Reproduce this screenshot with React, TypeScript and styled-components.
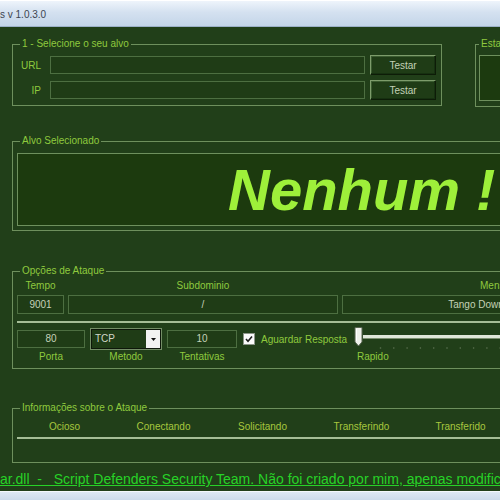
import React from 'react'
import styled, { createGlobalStyle } from 'styled-components'

const GlobalStyle = createGlobalStyle`
  html, body {
    margin: 0;
    padding: 0;
  }
  body {
    width: 500px;
    height: 500px;
    overflow: hidden;
    background: #213f19;
    font-family: 'Liberation Sans', Arial, sans-serif;
  }
`

const Screen = styled.div`
  width: 500px;
  height: 500px;
  overflow: hidden;
  display: flex;
  flex-direction: column;
  background: #213f19;
`

const TitleBar = styled.div`
  flex: 0 0 27px;
  box-sizing: border-box;
  display: flex;
  align-items: center;
  padding-top: 2px;
  background: linear-gradient(#eef4fb, #d4e1f0 45%, #c4d5e9);
  border-top: 1px solid #ffffff;
  border-bottom: 1px solid #9cb1c8;
  color: #3b4450;
  font-size: 10px;
  white-space: nowrap;
`

const Client = styled.div`
  flex: 0 0 auto;
  width: 680px;
  padding-left: 12px;
  display: flex;
  flex-direction: column;
`

const TopRow = styled.div`
  display: flex;
  align-items: flex-start;
  margin-top: 12px;
`

const Group = styled.fieldset<{ $top?: number; $left?: number; $width: number }>`
  margin: ${(p) => p.$top ?? 0}px 0 0 ${(p) => p.$left ?? 0}px;
  padding: 0;
  width: ${(p) => p.$width}px;
  box-sizing: border-box;
  min-width: 0;
  border: 1px solid #6e905d;
`

const Legend = styled.legend<{ $indent?: number }>`
  margin-left: ${(p) => p.$indent ?? 7}px;
  padding: 0 2px;
  font-size: 10px;
  line-height: 10px;
  color: #8fca3e;
  white-space: nowrap;
`

const TargetGrid = styled.div`
  display: grid;
  grid-template-columns: 32px 315px 66px;
  grid-auto-rows: 20px;
  column-gap: 5px;
  row-gap: 5px;
  align-items: center;
  padding: 6px 5px 5px 0;
`

const FieldLabel = styled.div`
  padding-right: 4px;
  text-align: right;
  font-size: 10px;
  color: #8fca3e;
`

const TextBox = styled.div<{ $align?: 'left' | 'center' }>`
  height: 18px;
  box-sizing: border-box;
  padding: 0 3px;
  border: 1px solid #4d6f41;
  background: #1f3c16;
  color: #c4d2b8;
  font-size: 10px;
  line-height: 16px;
  text-align: ${(p) => p.$align ?? 'left'};
  white-space: nowrap;
  overflow: hidden;
`

const TestButton = styled.button`
  height: 20px;
  padding: 0;
  border: 1px solid;
  border-color: #7d9c6b #0d1c07 #0d1c07 #7d9c6b;
  box-shadow: inset -1px -1px 0 #163010, inset 1px 1px 0 #3b5c30;
  background: #1f3c16;
  color: #c3d2b6;
  font-family: 'Liberation Sans', Arial, sans-serif;
  font-size: 10px;
`

const StatusBody = styled.div`
  padding: 6px 4px 5px 3px;
`

const StatusBox = styled.div`
  height: 46px;
  box-sizing: border-box;
  border: 1px solid #6e905d;
  background: #1c3a0f;
`

const DisplayBody = styled.div`
  padding: 7px 4px 4px;
`

const TargetDisplay = styled.div`
  height: 73px;
  box-sizing: border-box;
  padding-left: 210px;
  border: 1px solid #6e905d;
  background: #1c3a0e;
  color: #9ef03a;
  font-size: 58px;
  font-weight: bold;
  font-style: italic;
  line-height: 71px;
  white-space: nowrap;
`

const AttackBody = styled.div`
  padding: 4px 4px 6px;
`

const OptionGrid = styled.div`
  display: grid;
  grid-template-columns: 47px 270px 268px;
  grid-template-rows: 12px 19px;
  column-gap: 4px;
  row-gap: 3px;
`

const OptionLabel = styled.div<{ $indent?: number }>`
  padding-left: ${(p) => p.$indent ?? 0}px;
  font-size: 10px;
  line-height: 12px;
  color: #8fca3e;
  text-align: ${(p) => (p.$indent ? 'left' : 'center')};
  white-space: nowrap;
`

const OptionBox = styled(TextBox)`
  height: 19px;
  line-height: 17px;
`

const Rule = styled.div`
  height: 2px;
  margin: 7px 0 6px;
  background: #a5bd96;
`

const ControlRow = styled.div`
  display: flex;
  align-items: flex-start;
  gap: 6px;
`

const ControlCell = styled.div<{ $width: number; $start?: boolean }>`
  width: ${(p) => p.$width}px;
  flex: 0 0 auto;
  display: flex;
  flex-direction: column;
  align-items: ${(p) => (p.$start ? 'flex-start' : 'stretch')};
  gap: 3px;
`

const CellInput = styled(TextBox)`
  margin: 1px 0;
`

const CellLabel = styled.div<{ $indent?: number }>`
  padding-left: ${(p) => p.$indent ?? 0}px;
  font-size: 10px;
  line-height: 10px;
  color: #8fca3e;
  text-align: ${(p) => (p.$indent ? 'left' : 'center')};
  white-space: nowrap;
`

const Combo = styled.div`
  height: 20px;
  box-sizing: border-box;
  display: flex;
  border: 1px solid #0d1709;
  box-shadow: 0 0 0 1px #738d66;
  background: #1f3c16;
`

const ComboText = styled.div`
  flex: 1;
  padding-left: 3px;
  color: #d0d7c9;
  font-size: 10px;
  line-height: 18px;
`

const ComboButton = styled.div`
  width: 14px;
  display: flex;
  align-items: center;
  justify-content: center;
  background: #f2f3f1;
`

const CheckArea = styled.div`
  height: 20px;
  display: flex;
  align-items: center;
  gap: 6px;
  color: #8fca3e;
  font-size: 10px;
  white-space: nowrap;
`

const CheckBox = styled.div`
  width: 12px;
  height: 12px;
  box-sizing: border-box;
  display: flex;
  align-items: center;
  justify-content: center;
  border: 1px solid #8d968a;
  background: #fbfbfb;
`

const SliderArt = styled.svg`
  display: block;
  margin: -2px 0;
  overflow: visible;
`

const InfoBody = styled.div`
  padding: 9px 0 0 2px;
`

const InfoHeader = styled.div`
  display: grid;
  grid-template-columns: repeat(7, 99px);
  font-size: 10px;
  line-height: 10px;
  color: #a8c83e;
  text-align: center;
  white-space: nowrap;
`

const InfoRule = styled.div`
  height: 2px;
  margin: 5px 0 0 2px;
  background: #a5bd96;
`

const InfoValues = styled.div`
  height: 23px;
`

const Footer = styled.div`
  flex: 0 0 18px;
  width: 680px;
  margin-top: 7px;
  color: #27d227;
  font-size: 14px;
  line-height: 18px;
  text-decoration: underline;
  white-space: pre;
  overflow: hidden;
`

const BottomStrip = styled.div`
  flex: 0 0 12px;
  margin-top: 3px;
  border-top: 1px solid #f4f8fc;
  background: linear-gradient(#dde8f3, #c4d4e6);
`

const ticks = Array.from({ length: 22 }, (_, i) => 26.5 + i * 13.3)

const Slider = () => (
  <SliderArt width={320} height={24} viewBox="0 0 320 24">
    <rect x={9} y={8} width={311} height={3} fill="#dfe6d9" />
    <rect x={9} y={11} width={311} height={1} fill="#7b9070" />
    {ticks.map((x) => (
      <circle key={x} cx={x} cy={21} r={0.8} fill="#5f7454" />
    ))}
    <path d="M1 0.5 H8 V15 L4.5 19 L1 15 Z" fill="#eef0ea" stroke="#56644f" strokeWidth={1} />
    <path d="M2.5 2 V14" stroke="#ffffff" strokeWidth={1} />
  </SliderArt>
)

const headers = ['Ocioso', 'Conectando', 'Solicitando', 'Transferindo', 'Transferido', 'Solicitado', 'Falhou']

export default function App() {
  return (
    <>
      <GlobalStyle />
      <Screen>
        <TitleBar>s v 1.0.3.0</TitleBar>
        <Client>
          <TopRow>
            <Group $width={430}>
              <Legend>1 - Selecione o seu alvo</Legend>
              <TargetGrid>
                <FieldLabel>URL</FieldLabel>
                <TextBox />
                <TestButton>Testar</TestButton>
                <FieldLabel>IP</FieldLabel>
                <TextBox />
                <TestButton>Testar</TestButton>
              </TargetGrid>
            </Group>
            <Group $width={200} $left={33}>
              <Legend $indent={3}>Estado</Legend>
              <StatusBody>
                <StatusBox />
              </StatusBody>
            </Group>
          </TopRow>

          <Group $width={660} $top={29}>
            <Legend>Alvo Selecionado</Legend>
            <DisplayBody>
              <TargetDisplay>Nenhum !</TargetDisplay>
            </DisplayBody>
          </Group>

          <Group $width={660} $top={35}>
            <Legend>Opções de Ataque</Legend>
            <AttackBody>
              <OptionGrid>
                <OptionLabel>Tempo</OptionLabel>
                <OptionLabel>Subdominio</OptionLabel>
                <OptionLabel $indent={138}>Mensagem</OptionLabel>
                <OptionBox $align="center">9001</OptionBox>
                <OptionBox $align="center">/</OptionBox>
                <OptionBox $align="center">Tango Down</OptionBox>
              </OptionGrid>
              <Rule />
              <ControlRow>
                <ControlCell $width={68}>
                  <CellInput $align="center">80</CellInput>
                  <CellLabel>Porta</CellLabel>
                </ControlCell>
                <ControlCell $width={70}>
                  <Combo>
                    <ComboText>TCP</ComboText>
                    <ComboButton>
                      <svg width={5} height={3} viewBox="0 0 5 3">
                        <path d="M0 0 H5 L2.5 3 Z" fill="#111" />
                      </svg>
                    </ComboButton>
                  </Combo>
                  <CellLabel>Metodo</CellLabel>
                </ControlCell>
                <ControlCell $width={70}>
                  <CellInput $align="center">10</CellInput>
                  <CellLabel>Tentativas</CellLabel>
                </ControlCell>
                <ControlCell $width={105} $start>
                  <CheckArea>
                    <CheckBox>
                      <svg width={8} height={8} viewBox="0 0 8 8">
                        <path d="M1 4 L3 6.2 L7 1.5" fill="none" stroke="#1d1d1d" strokeWidth={1.6} />
                      </svg>
                    </CheckBox>
                    Aguardar Resposta
                  </CheckArea>
                </ControlCell>
                <ControlCell $width={320} $start>
                  <Slider />
                  <CellLabel $indent={3}>Rapido</CellLabel>
                </ControlCell>
              </ControlRow>
            </AttackBody>
          </Group>

          <Group $width={660} $top={34}>
            <Legend>Informações sobre o Ataque</Legend>
            <InfoBody>
              <InfoHeader>
                {headers.map((h) => (
                  <span key={h}>{h}</span>
                ))}
              </InfoHeader>
              <InfoRule />
              <InfoValues />
            </InfoBody>
          </Group>
        </Client>
        <Footer>{'ar.dll  -   Script Defenders Security Team. Não foi criado por mim, apenas modificado.'}</Footer>
        <BottomStrip />
      </Screen>
    </>
  )
}
